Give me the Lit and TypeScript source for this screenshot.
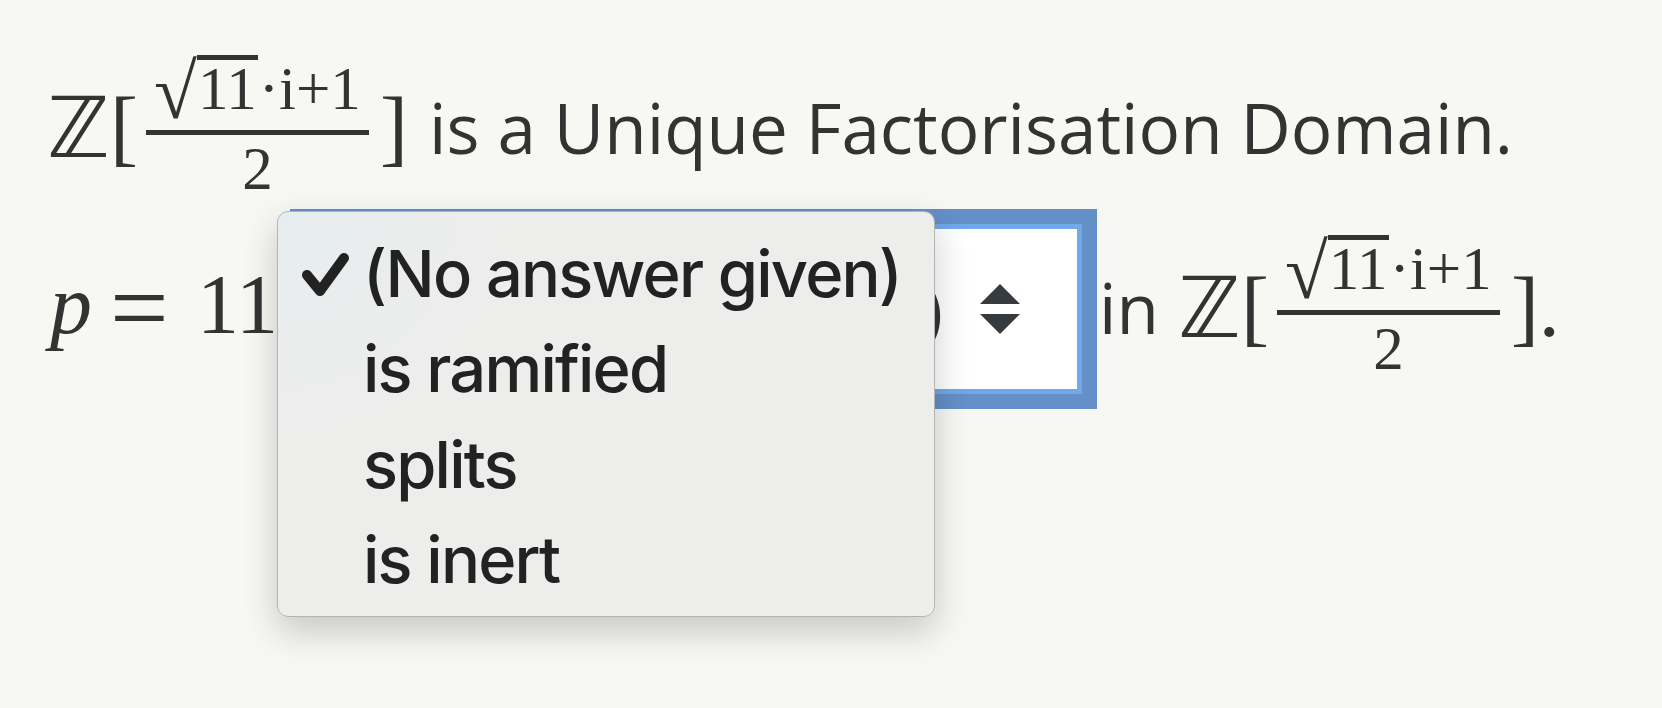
import { LitElement, html, css } from "lit";
import { customElement } from "lit/decorators.js";

const frac = html`<span class="frac"><span class="num"><span class="rad">√</span><span class="over">11</span><span class="rest">·i+1</span></span><span class="den">2</span></span>`;

@customElement("app-root")
export class AppRoot extends LitElement {
  static styles = css`
    :host { display: block; width: 1662px; height: 708px; overflow: hidden; background: #f7f8f4; color: #333; position: relative; font-family: "Open Sans", sans-serif; }
    .page { padding: 40px 0 0 47px; display: flex; flex-direction: column; }
    .row { display: flex; height: 180px; align-items: flex-start; white-space: nowrap; }
    .m { font: 84px/100px "Liberation Serif", serif; margin-top: 38px; }
    .z { font: 84px/100px "DejaVu Sans", sans-serif; margin-top: 38px; width: 63px; }
    .i { font-style: italic; width: 60px; margin-top: 35px; margin-left: 3px; }
    .eq { width: 87px; font-size: 104px; }
    .eleven { width: 86px; margin-top: 35px; }
    .t { font-size: 69.2px; line-height: 80px; margin-top: 47px; }
    .frac { display: flex; flex-direction: column; align-items: center; width: 223px; margin: 3px 11px 0 8px; font: 61px/58px "Liberation Serif", serif; }
    .num { display: flex; box-sizing: border-box; height: 87px; padding-bottom: 12px; align-items: flex-end; }
    .rad { font-size: 78px; line-height: 58px; margin-bottom: -3px; }
    .over { border-top: 5px solid #333; line-height: 58px; padding: 0 1px; }
    .rest { margin-left: 1px; }
    .den { border-top: 5px solid #333; width: 100%; text-align: center; padding-top: 5px; }
    .lead { margin-left: 21px; }
    .in-z { margin-left: 19px; }
    .select { box-sizing: border-box; width: 807px; height: 200px; margin: -11px 2px 0 7px; border: 15px solid #648fc7; background: #fff; outline: 5px solid #70a8ea; outline-offset: -20px; display: flex; align-items: center; justify-content: space-between; padding: 0 62px 0 62px; font-size: 69.2px; }
    .select svg { width: 40px; height: 50px; flex: none; }
    .menu { position: absolute; left: 277px; top: 211px; box-sizing: border-box; width: 658px; height: 406px; padding: 14px 0; border: 1px solid #b4b5b3; border-radius: 11px; background: radial-gradient(circle at 0 0, #e7edee 0, #ededec 220px); box-shadow: 0 14px 36px rgba(0,0,0,.2); font: 450 65px/96px Inter, "Liberation Sans", sans-serif; color: #222; letter-spacing: -1.8px; }
    .opt { display: flex; align-items: center; height: 95.5px; padding-left: 85px; }
    .check { position: absolute; left: 23px; top: 38px; width: 50px; height: 50px; }
  `;
  render() {
    return html`<div class="page">
      <div class="row"><span class="z">ℤ</span><span class="m">[</span>${frac}<span class="m">]</span><span class="t lead">is a Unique Factorisation Domain.</span></div>
      <div class="row">
        <span class="m i">p</span><span class="m eq">=</span><span class="m eleven">11</span>
        <span class="select"><span>(No answer given)</span><svg viewBox="0 0 40 50"><path d="M0 20 20 0 40 20zM0 30H40L20 50z" fill="#363b40"/></svg></span>
        <span class="t">in</span><span class="z in-z">ℤ</span><span class="m">[</span>${frac}<span class="m">].</span>
      </div>
    </div>
    <div class="menu">
      <svg class="check" viewBox="0 0 50 50"><path d="M6 25 19 41 43 8" fill="none" stroke="#222" stroke-width="10" stroke-linecap="round" stroke-linejoin="round"/></svg>
      <div class="opt">(No answer given)</div><div class="opt">is ramified</div><div class="opt">splits</div><div class="opt">is inert</div>
    </div>`;
  }
}
